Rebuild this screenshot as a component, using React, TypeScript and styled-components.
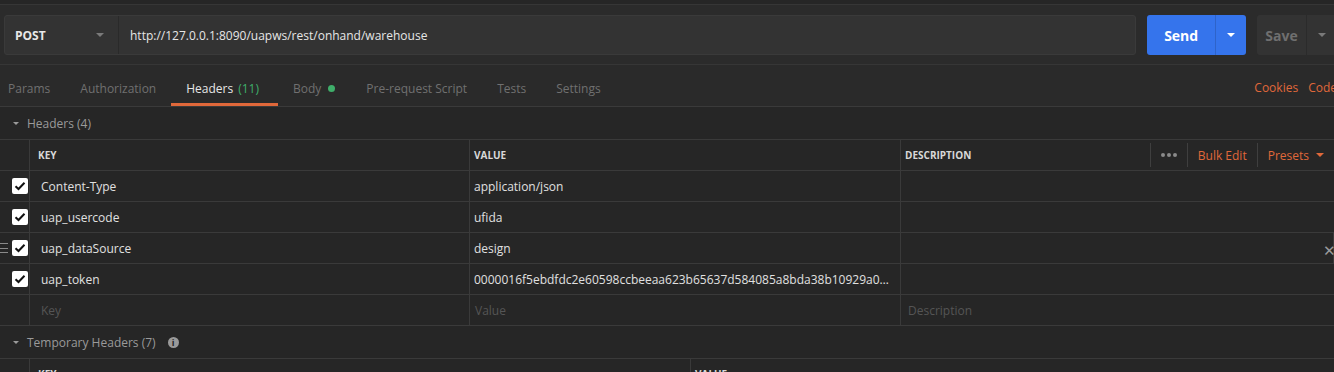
import React, { FunctionComponent } from 'react'
import styled, { createGlobalStyle } from 'styled-components'

const GlobalStyle = createGlobalStyle`
  body {
    margin: 0;
    background: #262626;
    font-family: 'Open Sans', 'Liberation Sans', sans-serif;
    overflow: hidden;
  }
`

const Page = styled.div`
  width: 1334px;
  height: 372px;
  overflow: hidden;
  background: #262626;
`

const TopBar = styled.div`
  margin-top: 4px;
  border-top: 1px solid #363636;
  border-bottom: 1px solid #363636;
  background: #2b2b2b;
  display: flex;
  align-items: center;
  gap: 11px;
  padding: 10px 0 9px 4px;
  white-space: nowrap;
`

const RequestField = styled.div`
  width: 1132px;
  flex-shrink: 0;
  display: flex;
  height: 40px;
  background: #333333;
  border: 1px solid #3a3a3a;
  border-radius: 3px;
  box-sizing: border-box;
`

const MethodSelect = styled.div`
  width: 114px;
  display: flex;
  align-items: center;
  justify-content: space-between;
  padding: 0 14px 0 10px;
  box-sizing: border-box;
  border-right: 1px solid #2a2a2a;
  color: #e8e8e8;
  font-size: 12px;
  font-weight: 700;
`

const UrlText = styled.div`
  display: flex;
  align-items: center;
  padding-left: 11px;
  color: #e6e6e6;
  font-size: 12px;
`

const SplitButton = styled.div<{ $primary?: boolean; $width: number }>`
  display: flex;
  width: ${(p) => p.$width}px;
  height: 40px;
  flex-shrink: 0;
  border-radius: 3px;
  background: ${(p) => (p.$primary ? '#3574ec' : '#333333')};
  color: ${(p) => (p.$primary ? '#ffffff' : '#6f6f6f')};
  font-size: 14px;
  font-weight: 700;
`

const ButtonMain = styled.div<{ $width: number }>`
  width: ${(p) => p.$width}px;
  display: flex;
  align-items: center;
  justify-content: center;
`

const ButtonCaret = styled.div<{ $dark?: boolean }>`
  width: 30px;
  display: flex;
  align-items: center;
  justify-content: center;
  border-left: 1px solid ${(p) => (p.$dark ? '#2b2b2b' : '#2e63c9')};
`

const Caret = styled.span<{ $color: string; $size?: number }>`
  width: 0;
  height: 0;
  border-left: ${(p) => p.$size ?? 4}px solid transparent;
  border-right: ${(p) => p.$size ?? 4}px solid transparent;
  border-top: ${(p) => p.$size ?? 4}px solid ${(p) => p.$color};
  display: inline-block;
`

const TabBar = styled.div`
  height: 41px;
  display: flex;
  align-items: stretch;
  justify-content: space-between;
  border-bottom: 1px solid #3a3a3a;
  background: #2a2a2a;
  white-space: nowrap;
`

const Tabs = styled.div`
  display: flex;
  margin-left: -7px;
`

const Tab = styled.div<{ $active?: boolean }>`
  display: flex;
  align-items: center;
  gap: 5px;
  padding: 9px ${(p) => (p.$active ? 19 : 15)}px 0 15px;
  font-size: 12px;
  color: ${(p) => (p.$active ? '#e6e6e6' : '#707070')};
  border-bottom: 3px solid ${(p) => (p.$active ? '#e0683a' : 'transparent')};
`

const Count = styled.span`
  color: #3fae6a;
`

const Dot = styled.span`
  width: 7px;
  height: 7px;
  border-radius: 50%;
  background: #3fae6a;
  margin-left: 2px;
  margin-right: 1px;
`

const TabLinks = styled.div`
  display: flex;
  align-items: center;
  gap: 10px;
  padding-top: 3px;
  margin-right: -3px;
  color: #e0683a;
  font-size: 12px;
`

const SectionHeader = styled.div`
  height: 32px;
  display: flex;
  align-items: center;
  gap: 8px;
  padding-left: 13px;
  border-bottom: 1px solid #3a3a3a;
  color: #9a9a9a;
  font-size: 12px;
`

const InfoIcon = styled.span`
  width: 11px;
  height: 11px;
  border-radius: 50%;
  background: #9a9a9a;
  color: #262626;
  font-size: 9px;
  font-weight: 700;
  display: flex;
  align-items: center;
  justify-content: center;
  margin-left: 4px;
`

const Row = styled.div<{ $cols: string }>`
  display: grid;
  grid-template-columns: ${(p) => p.$cols};
  height: 31px;
  border-bottom: 1px solid #3a3a3a;
  box-sizing: border-box;
  position: relative;
`

const Cell = styled.div<{ $placeholder?: boolean; $head?: boolean; $pad?: number }>`
  display: flex;
  align-items: center;
  padding-left: ${(p) => p.$pad ?? 11}px;
  border-right: 1px solid #3a3a3a;
  color: ${(p) => (p.$placeholder ? '#555555' : p.$head ? '#d8d8d8' : '#e0e0e0')};
  font-size: ${(p) => (p.$head ? 10 : 12)}px;
  font-weight: ${(p) => (p.$head ? 700 : 400)};
  overflow: hidden;
  white-space: nowrap;
  min-width: 0;
  &:last-child {
    border-right: none;
  }
`

const ValueText = styled.span`
  overflow: hidden;
  text-overflow: ellipsis;
  white-space: nowrap;
  max-width: 418px;
  display: block;
`

const CheckCell = styled.div`
  display: flex;
  align-items: center;
  justify-content: flex-end;
  padding-right: 1px;
  border-right: 1px solid #3a3a3a;
  position: relative;
`

const CheckBox = styled.span`
  width: 16px;
  height: 16px;
  border-radius: 2px;
  background: #ffffff;
  display: flex;
  align-items: center;
  justify-content: center;
`

const DragHandle = styled.span`
  position: absolute;
  left: 0;
  top: 10px;
  width: 8px;
  height: 10px;
  display: flex;
  flex-direction: column;
  justify-content: space-between;
  & > i {
    display: block;
    height: 1px;
    background: #8a8a8a;
  }
`

const HeadTools = styled.div`
  display: flex;
  align-items: center;
  justify-content: flex-end;
  flex: 1;
  height: 100%;
`

const HeadTool = styled.div<{ $orange?: boolean }>`
  display: flex;
  align-items: center;
  gap: 7px;
  padding: 0 10px;
  height: 24px;
  border-left: 1px solid #3f3f3f;
  color: ${(p) => (p.$orange ? '#e0683a' : '#8a8a8a')};
  font-size: 12px;
  font-weight: 400;
`

const Close = styled.span`
  position: absolute;
  right: -2px;
  top: 7px;
  color: #9a9a9a;
  font-size: 15px;
`

const headerCols = '30px 440px 431px 1fr'
const tempCols = '30px 661px 1fr'

type HeaderRow = { key: string; value: string; hover?: boolean }

const rows: HeaderRow[] = [
  { key: 'Content-Type', value: 'application/json' },
  { key: 'uap_usercode', value: 'ufida' },
  { key: 'uap_dataSource', value: 'design', hover: true },
  { key: 'uap_token', value: '0000016f5ebdfdc2e60598ccbeeaa623b65637d584085a8bda38b10929a0a4c2e91b' },
]

const Check: FunctionComponent = () => (
  <CheckBox>
    <svg width="12" height="10" viewBox="0 0 12 10">
      <path d="M1.5 5.2 L4.5 8 L10.5 1.8" fill="none" stroke="#111" strokeWidth="2" />
    </svg>
  </CheckBox>
)

const App: FunctionComponent = () => {
  return (
    <>
      <GlobalStyle />
      <Page>
        <TopBar>
          <RequestField>
            <MethodSelect>
              POST
              <Caret $color="#7a7a7a" />
            </MethodSelect>
            <UrlText>http://127.0.0.1:8090/uapws/rest/onhand/warehouse</UrlText>
          </RequestField>
          <SplitButton $primary $width={99}>
            <ButtonMain $width={69}>Send</ButtonMain>
            <ButtonCaret>
              <Caret $color="#ffffff" />
            </ButtonCaret>
          </SplitButton>
          <SplitButton $width={80}>
            <ButtonMain $width={49}>Save</ButtonMain>
            <ButtonCaret $dark>
              <Caret $color="#7a7a7a" />
            </ButtonCaret>
          </SplitButton>
        </TopBar>

        <TabBar>
          <Tabs>
            <Tab>Params</Tab>
            <Tab>Authorization</Tab>
            <Tab $active>
              Headers <Count>(11)</Count>
            </Tab>
            <Tab>
              Body <Dot />
            </Tab>
            <Tab>Pre-request Script</Tab>
            <Tab>Tests</Tab>
            <Tab>Settings</Tab>
          </Tabs>
          <TabLinks>
            <span>Cookies</span>
            <span>Code</span>
          </TabLinks>
        </TabBar>

        <SectionHeader>
          <Caret $color="#9a9a9a" $size={3.5} />
          Headers (4)
        </SectionHeader>

        <Row $cols={headerCols}>
          <CheckCell />
          <Cell $head $pad={8}>KEY</Cell>
          <Cell $head $pad={4}>VALUE</Cell>
          <Cell $head $pad={4}>
            DESCRIPTION
            <HeadTools>
              <HeadTool>
                <svg width="16" height="4" viewBox="0 0 16 4">
                  <circle cx="2" cy="2" r="2" fill="#8a8a8a" />
                  <circle cx="8" cy="2" r="2" fill="#8a8a8a" />
                  <circle cx="14" cy="2" r="2" fill="#8a8a8a" />
                </svg>
              </HeadTool>
              <HeadTool $orange>Bulk Edit</HeadTool>
              <HeadTool $orange>
                Presets <Caret $color="#e0683a" />
              </HeadTool>
            </HeadTools>
          </Cell>
        </Row>

        {rows.map((r) => (
          <Row $cols={headerCols} key={r.key}>
            <CheckCell>
              {r.hover && (
                <DragHandle>
                  <i />
                  <i />
                  <i />
                </DragHandle>
              )}
              <Check />
            </CheckCell>
            <Cell>{r.key}</Cell>
            <Cell $pad={4}>
              <ValueText>{r.value}</ValueText>
            </Cell>
            <Cell />
            {r.hover && <Close>✕</Close>}
          </Row>
        ))}

        <Row $cols={headerCols}>
          <CheckCell />
          <Cell $placeholder>Key</Cell>
          <Cell $placeholder $pad={5}>
            Value
          </Cell>
          <Cell $placeholder $pad={7}>
            Description
          </Cell>
        </Row>

        <SectionHeader>
          <Caret $color="#9a9a9a" $size={3.5} />
          Temporary Headers (7)
          <InfoIcon>i</InfoIcon>
        </SectionHeader>

        <Row $cols={tempCols}>
          <CheckCell />
          <Cell $head $pad={8}>KEY</Cell>
          <Cell $head $pad={4}>
            VALUE
          </Cell>
        </Row>
      </Page>
    </>
  )
}

export default App
